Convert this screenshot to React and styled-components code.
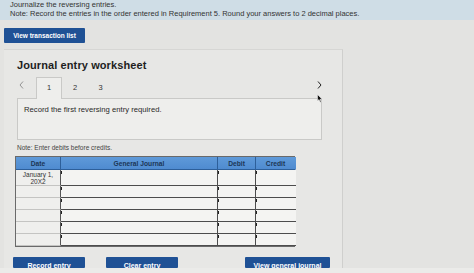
import React from 'react';
import styled, { createGlobalStyle } from 'styled-components';

const Global = createGlobalStyle`
  html, body { margin: 0; padding: 0; }
  body {
    background: #e3e3e1;
    font-family: "Liberation Sans", Arial, sans-serif;
    color: #2b2b2b;
    overflow: hidden;
  }
`;

const Page = styled.div`
  width: 474px;
  height: 273px;
  overflow: hidden;
  position: relative;
  background: #e3e3e1;
`;

const Banner = styled.div`
  height: 20px;
  box-sizing: border-box;
  padding: 1px 0 0 10px;
  background: #cfdde6;
  font-size: 7.5px;
  line-height: 8.5px;
  color: #333;
`;

const TopBar = styled.div`
  padding: 8px 0 0 4px;
`;

const BlueButton = styled.div`
  width: ${p => p.$w}px;
  height: ${p => p.$h || 15}px;
  box-sizing: border-box;
  background: #1f5195;
  color: #fff;
  font-size: ${p => (p.$cut ? 7 : 6.5)}px;
  font-weight: bold;
  display: flex;
  align-items: ${p => (p.$cut ? 'flex-start' : 'center')};
  padding-top: ${p => (p.$cut ? 5 : 0)}px;
  justify-content: center;
  text-decoration: ${p => (p.$cut ? 'underline' : 'none')};
  overflow: hidden;
  line-height: 8px;
  border-radius: 1px;
`;

const Panel = styled.div`
  margin: 6px 0 0 4px;
  width: 339px;
  height: 219px;
  box-sizing: border-box;
  background: #e7e7e5;
  border-top: 1px solid #d6d6d4;
  border-right: 1px solid #cfcfcd;
  padding: 9px 0 0 13px;
  position: relative;
`;

const Title = styled.div`
  font-size: 11px;
  font-weight: bold;
  line-height: 12px;
  color: #1e1e1e;
  letter-spacing: 0.1px;
`;

const TabRow = styled.div`
  margin-top: 6px;
  width: 305px;
  height: 21px;
  display: flex;
  align-items: stretch;
`;

const Chevron = styled.div`
  width: ${p => p.$w}px;
  display: flex;
  align-items: center;
  justify-content: ${p => p.$right ? 'flex-end' : 'flex-start'};
  padding-left: ${p => p.$right ? 0 : 2}px;
  padding-bottom: 6px;
  box-sizing: border-box;
`;

const Tab = styled.div`
  width: ${p => p.$w}px;
  box-sizing: border-box;
  display: flex;
  align-items: center;
  justify-content: center;
  padding-bottom: 2px;
  font-size: 7.5px;
  color: #333;
  background: ${p => (p.$active ? '#eeeeec' : 'transparent')};
  border: 1px solid ${p => (p.$active ? '#c9c9c7' : 'transparent')};
  border-bottom: none;
  margin-bottom: -1px;
  position: relative;
  z-index: 1;
`;

const Spacer = styled.div`
  flex: 1;
`;

const ContentBox = styled.div`
  width: 305px;
  height: 42px;
  box-sizing: border-box;
  background: #eeeeec;
  border: 1px solid #c9c9c7;
  padding: 6px 6px;
  font-size: 7.7px;
  color: #2a2a2a;
`;

const Note = styled.div`
  margin-top: 5px;
  font-size: 6.5px;
  line-height: 6px;
  color: #444;
`;

const Table = styled.div`
  margin: 5px 0 0 -2px;
  width: 280px;
  display: grid;
  grid-template-columns: 45px 157px 38px 40px;
  grid-template-rows: 13px 16px repeat(5, 12px);
  border: 1px solid #6a6a6a;
  box-sizing: border-box;
  background: #f2f2f0;
`;

const Head = styled.div`
  background: linear-gradient(#5f9ad9, #4f8bd0);
  border-right: 1px solid ${p => (p.$last ? 'transparent' : '#2d5f9a')};
  border-bottom: 1px solid #2d5f9a;
  color: #1c3656;
  font-size: 6.7px;
  font-weight: bold;
  display: flex;
  align-items: center;
  justify-content: center;
`;

const DateCell = styled.div`
  background: #efefed;
  border-bottom: 1px solid #c4c4c2;
  border-right: 1px solid #555;
  font-size: 6.5px;
  line-height: 7px;
  color: #333;
  text-align: center;
  padding-top: 1px;
`;

const InputCell = styled.div`
  background: #f4f4f2;
  border-right: ${p => (p.$last ? 0 : 1.5)}px solid #4d4d4d;
  border-bottom: 1.5px solid #4d4d4d;
  box-sizing: border-box;
  position: relative;
  &::before {
    content: '';
    position: absolute;
    left: 0;
    top: 1px;
    width: 1px;
    height: 3px;
    background: #222;
  }
`;

const BottomRow = styled.div`
  position: absolute;
  left: 9px;
  top: 207px;
  width: 317px;
  display: flex;
`;

const Gap = styled.div`
  width: ${p => p.$w}px;
`;

const Strip = styled.div`
  position: absolute;
  left: 0;
  right: 0;
  top: 268px;
  height: 5px;
  background: #ebebe9;
`;

const Cursor = styled.svg`
  position: absolute;
  left: 317px;
  top: 94px;
`;

const rows = [0, 1, 2, 3, 4, 5];

export default function App() {
  return (
    <Page>
      <Global />
      <Banner>
        <div>Journalize the reversing entries.</div>
        <div>Note: Record the entries in the order entered in Requirement 5. Round your answers to 2 decimal places.</div>
      </Banner>
      <TopBar>
        <BlueButton $w={81}>View transaction list</BlueButton>
      </TopBar>
      <Panel>
        <Title>Journal entry worksheet</Title>
        <TabRow>
          <Chevron $w={19}>
            <svg width="5" height="8" viewBox="0 0 5 8"><path d="M4 0.5 L1 4 L4 7.5" fill="none" stroke="#8a8a8a" strokeWidth="0.9" /></svg>
          </Chevron>
          <Tab $w={26} $active>1</Tab>
          <Tab $w={26}>2</Tab>
          <Tab $w={25}>3</Tab>
          <Spacer />
          <Chevron $w={10} $right>
            <svg width="5" height="8" viewBox="0 0 5 8"><path d="M1 0.5 L4 4 L1 7.5" fill="none" stroke="#222" strokeWidth="1" /></svg>
          </Chevron>
        </TabRow>
        <ContentBox>Record the first reversing entry required.</ContentBox>
        <Note>Note: Enter debits before credits.</Note>
        <Table>
          <Head>Date</Head>
          <Head>General Journal</Head>
          <Head>Debit</Head>
          <Head $last>Credit</Head>
          {rows.map(i => (
            <React.Fragment key={i}>
              <DateCell>{i === 0 ? <>January 1,<br />20X2</> : null}</DateCell>
              <InputCell />
              <InputCell />
              <InputCell $last />
            </React.Fragment>
          ))}
        </Table>
        <BottomRow>
          <BlueButton $w={72} $h={11} $cut>Record entry</BlueButton>
          <Gap $w={21} />
          <BlueButton $w={72} $h={11} $cut>Clear entry</BlueButton>
          <Gap $w={67} />
          <BlueButton $w={85} $h={11} $cut>View general journal</BlueButton>
        </BottomRow>
      </Panel>
      <Strip />
      <Cursor width="6" height="9" viewBox="0 0 6 9">
        <path d="M0.5 0.5 L0.5 7 L2 5.6 L3.2 8.3 L4.2 7.9 L3.1 5.2 L5.2 5.2 Z" fill="#111" stroke="#fff" strokeWidth="0.5" />
      </Cursor>
    </Page>
  );
}
